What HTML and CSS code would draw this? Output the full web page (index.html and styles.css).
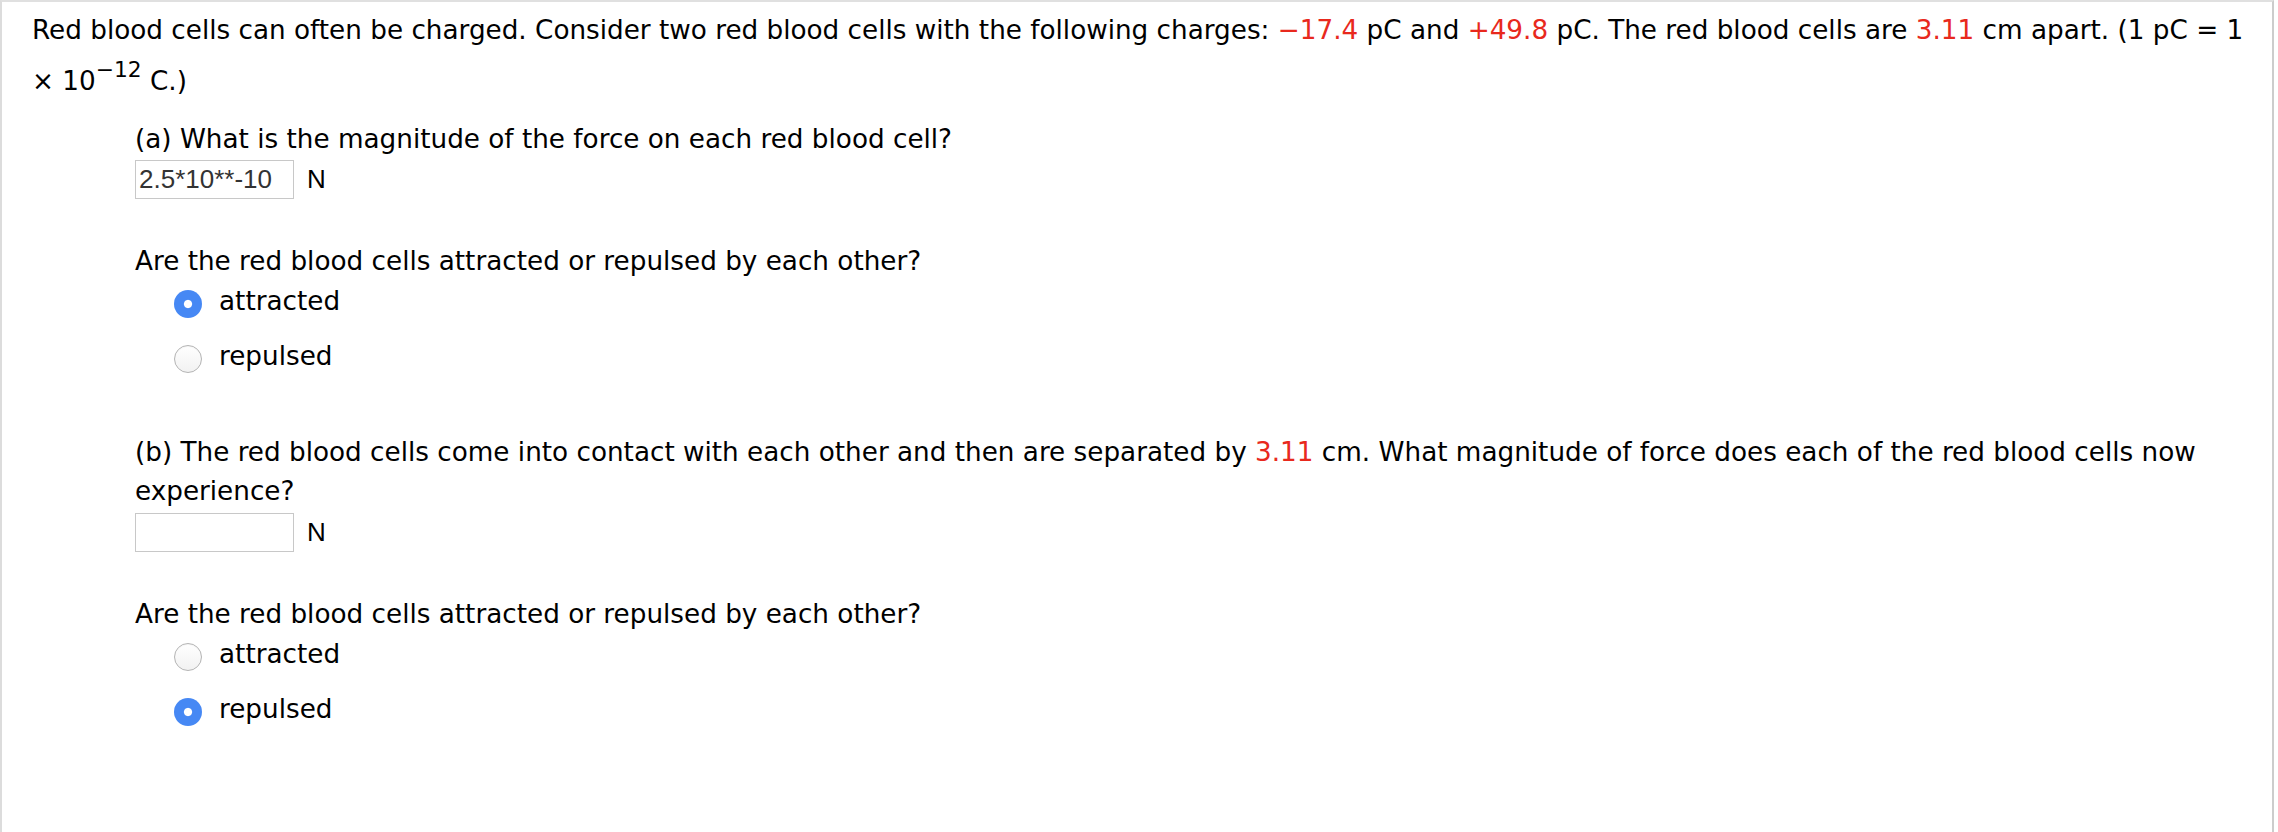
FILE: index.html
```html
<!DOCTYPE html>
<html lang="en">
<head>
<meta charset="utf-8">
<title>Red blood cells</title>
<link rel="stylesheet" href="styles.css">
</head>
<body>
<div class="card">
  <p class="intro">Red blood cells can often be charged. Consider two red blood cells with the following charges: <span class="val">&minus;17.4</span> pC and <span class="val">+49.8</span> pC. The red blood cells are <span class="val">3.11</span> cm apart. (1 pC = 1 &times; 10<sup>&minus;12</sup> C.)</p>

  <div class="part part-a">
    <p class="label label-tight">(a) What is the magnitude of the force on each red blood cell?</p>
    <div class="answer-row answer-row-a">
      <input class="answer" type="text" value="2.5*10**-10" readonly>
      <span class="unit">N</span>
    </div>
    <p class="label ask">Are the red blood cells attracted or repulsed by each other?</p>
    <div class="choices">
      <label class="choice"><input class="radio" type="radio" name="qa" checked><span>attracted</span></label>
      <label class="choice"><input class="radio" type="radio" name="qa"><span>repulsed</span></label>
    </div>
  </div>

  <div class="part part-b">
    <p class="label">(b) The red blood cells come into contact with each other and then are separated by <span class="val">3.11</span> cm. What magnitude of force does each of the red blood cells now experience?</p>
    <div class="answer-row answer-row-b">
      <input class="answer" type="text" value="" readonly>
      <span class="unit">N</span>
    </div>
    <p class="label ask">Are the red blood cells attracted or repulsed by each other?</p>
    <div class="choices">
      <label class="choice"><input class="radio" type="radio" name="qb"><span>attracted</span></label>
      <label class="choice"><input class="radio" type="radio" name="qb" checked><span>repulsed</span></label>
    </div>
  </div>
</div>
</body>
</html>
```

FILE: styles.css
```css
html, body {
  margin: 0;
  padding: 0;
  background: #fff;
}

body {
  font-family: "DejaVu Sans", Verdana, sans-serif;
  font-size: 26.25px;
  color: #000;
}

.card {
  box-sizing: border-box;
  width: 2274px;
  min-height: 832px;
  border-top: 2px solid #e0e0e0;
  border-left: 2px solid #dcdcdc;
  border-right: 2px solid #cccccc;
  padding: 9px 20px 0 30px;
}

p {
  margin: 0;
}

.intro {
  line-height: 39px;
}

.intro sup {
  font-size: 0.83em;
  vertical-align: 13px;
}

.val {
  color: #e8291d;
}

.part {
  padding-left: 103px;
}

.part-a {
  margin-top: 23px;
}

.part-b {
  margin-top: 52px;
}

.label {
  line-height: 39px;
}

.label-tight {
  line-height: 30px;
}

.answer-row {
  display: flex;
  align-items: center;
  gap: 13px;
  height: 39px;
}

.answer-row-a {
  margin-top: 5.5px;
}

.answer-row-b {
  margin-top: 2px;
}

.answer {
  box-sizing: border-box;
  width: 159px;
  height: 39px;
  margin: 0;
  padding: 0 0 0 3px;
  border: 1.5px solid #c8c8c8;
  border-radius: 0;
  font-family: "Liberation Sans", Arial, sans-serif;
  font-size: 26px;
  color: #333;
  background: #fff;
  outline: none;
}

.unit {
  font-family: "Liberation Sans", Arial, sans-serif;
  font-size: 26px;
}

.ask {
  margin-top: 43px;
}

.choices {
  display: flex;
  flex-direction: column;
  gap: 11px;
  margin-top: 1px;
  padding-left: 39px;
}

.choice {
  display: flex;
  align-items: center;
  gap: 17px;
  height: 44px;
}

.choice span {
  line-height: 38px;
  margin-bottom: 6px;
}

.radio {
  appearance: none;
  -webkit-appearance: none;
  box-sizing: border-box;
  width: 28px;
  height: 28px;
  margin: 0;
  border-radius: 50%;
  border: 1.5px solid #b4b4b4;
  background: linear-gradient(#fff, #f2f2f2);
  box-shadow: inset 0 1px 1px rgba(0,0,0,0.04);
}

.radio:checked {
  border: none;
  background: radial-gradient(circle, #fff 0, #fff 3.6px, #4688f4 4.6px);
  box-shadow: none;
}
```
